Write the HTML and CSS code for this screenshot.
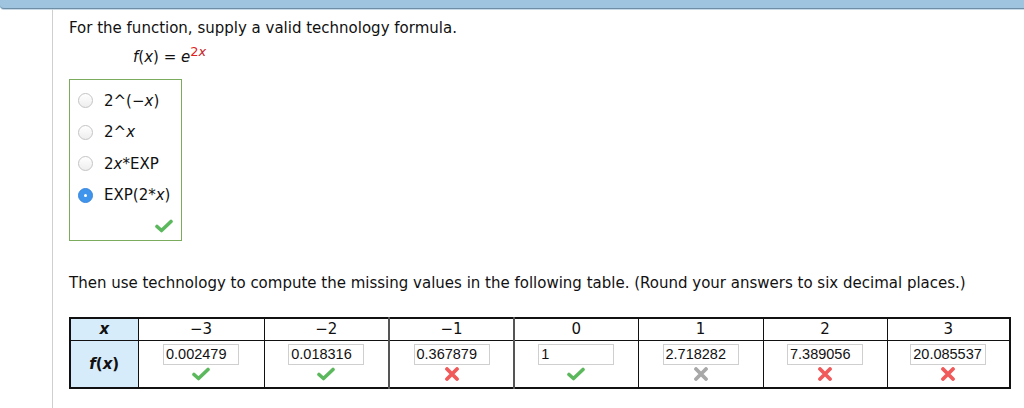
FILE: index.html
```html
<!DOCTYPE html>
<html>
<head>
<meta charset="utf-8">
<link rel="stylesheet" href="styles.css">
</head>
<body>
<div class="topbar"></div>
<div class="page">
  <p class="prompt">For the function, supply a valid technology formula.</p>
  <p class="formula"><i>f</i>(<i>x</i>) = <i>e</i><sup>2<i>x</i></sup></p>
  <div class="choices">
    <div class="opt"><span class="radio"></span><span>2^(−<i>x</i>)</span></div>
    <div class="opt"><span class="radio"></span><span>2^<i>x</i></span></div>
    <div class="opt"><span class="radio"></span><span>2<i>x</i>*EXP</span></div>
    <div class="opt"><span class="radio on"></span><span>EXP(2*<i>x</i>)</span></div>
    <div class="mark-row">
      <svg class="icon" width="18" height="14" viewBox="0 0 18 14"><path d="M2 7.5 L6.5 11.5 L16 2.5" fill="none" stroke="#5cb85c" stroke-width="3.6" stroke-linecap="round" stroke-linejoin="round"/></svg>
    </div>
  </div>
  <p class="prompt second">Then use technology to compute the missing values in the following table. (Round your answers to six decimal places.)</p>
  <table class="grid">
    <colgroup>
      <col class="c0"><col class="c1"><col class="c2"><col class="c3"><col class="c4"><col class="c5"><col class="c6"><col class="c7">
    </colgroup>
    <tr class="head">
      <th class="lab"><b><i>x</i></b></th>
      <td>−3</td><td>−2</td><td class="thick">−1</td><td class="thick">0</td><td>1</td><td>2</td><td>3</td>
    </tr>
    <tr class="vals">
      <th class="lab"><b><i>f</i>(<i>x</i>)</b></th>
      <td><div class="inp">0.002479</div><svg class="icon" width="18" height="14" viewBox="0 0 18 14"><path d="M2 7.5 L6.5 11.5 L16 2.5" fill="none" stroke="#5cb85c" stroke-width="3.6" stroke-linecap="round" stroke-linejoin="round"/></svg></td>
      <td><div class="inp">0.018316</div><svg class="icon" width="18" height="14" viewBox="0 0 18 14"><path d="M2 7.5 L6.5 11.5 L16 2.5" fill="none" stroke="#5cb85c" stroke-width="3.6" stroke-linecap="round" stroke-linejoin="round"/></svg></td>
      <td class="thick"><div class="inp">0.367879</div><svg class="icon" width="18" height="14" viewBox="0 0 18 14"><path d="M4 2 L14 12 M14 2 L4 12" fill="none" stroke="#f05a5a" stroke-width="3.8" stroke-linecap="round"/></svg></td>
      <td class="thick"><div class="inp">1</div><svg class="icon" width="18" height="14" viewBox="0 0 18 14"><path d="M2 7.5 L6.5 11.5 L16 2.5" fill="none" stroke="#5cb85c" stroke-width="3.6" stroke-linecap="round" stroke-linejoin="round"/></svg></td>
      <td><div class="inp">2.718282</div><svg class="icon" width="18" height="14" viewBox="0 0 18 14"><path d="M4 2 L14 12 M14 2 L4 12" fill="none" stroke="#a8a8a8" stroke-width="3.8" stroke-linecap="round"/></svg></td>
      <td><div class="inp">7.389056</div><svg class="icon" width="18" height="14" viewBox="0 0 18 14"><path d="M4 2 L14 12 M14 2 L4 12" fill="none" stroke="#f05a5a" stroke-width="3.8" stroke-linecap="round"/></svg></td>
      <td><div class="inp">20.085537</div><svg class="icon" width="18" height="14" viewBox="0 0 18 14"><path d="M4 2 L14 12 M14 2 L4 12" fill="none" stroke="#f05a5a" stroke-width="3.8" stroke-linecap="round"/></svg></td>
    </tr>
  </table>
</div>
</body>
</html>
```
FILE: styles.css
```css
html, body {
  margin: 0;
  padding: 0;
  background: #fff;
}
body {
  font-family: "DejaVu Sans", Verdana, sans-serif;
  font-size: 15px;
  color: #111;
}
.topbar {
  height: 8px;
  background: #9fc4e0;
  border-bottom: 1px solid #6d8ea5;
  box-shadow: 0 1px 0 #c9d9e5;
  border-bottom-left-radius: 4px;
}
.page {
  margin-left: 52px;
  border-left: 1px solid #cfcfcf;
  height: 399px;
  padding-left: 16px;
  box-sizing: border-box;
}
p { margin: 0; }
.prompt {
  padding-top: 10px;
  line-height: 18px;
}
.formula {
  margin-top: 11px;
  margin-left: 64px;
  line-height: 18px;
}
.formula sup {
  color: #e0231f;
  font-size: 13px;
  vertical-align: 6px;
  line-height: 0;
}
.formula sup i { color: #c4221f; }
.choices {
  margin-top: 13px;
  width: 113px;
  border: 1px solid #7bab5c;
  box-sizing: border-box;
  padding-top: 5px;
  height: 162px;
}
.opt {
  display: flex;
  align-items: center;
  height: 31.5px;
  padding-left: 8px;
  gap: 11px;
}
.radio {
  width: 15px;
  height: 15px;
  border-radius: 50%;
  border: 1px solid #c4c4c4;
  background: linear-gradient(#fff, #eeeeee);
  box-sizing: border-box;
  position: relative;
  flex: none;
}
.radio.on {
  background: #3f94ec;
  border-color: #3a88dc;
}
.radio.on::after {
  content: "";
  position: absolute;
  left: 5px;
  top: 5px;
  width: 3px;
  height: 3px;
  border-radius: 50%;
  background: #fff;
}
.mark-row {
  display: flex;
  justify-content: flex-end;
  padding-right: 8px;
  margin-top: 8px;
}
.second {
  padding-top: 33px;
}
.grid {
  margin-top: 25px;
  border-collapse: collapse;
  table-layout: fixed;
  width: 940px;
  border: 2px solid #111;
}
.grid .c0 { width: 68px; }
.grid .c1 { width: 126px; }
.grid .c2, .grid .c3, .grid .c5 { width: 125px; }
.grid .c4, .grid .c6 { width: 124px; }
.grid .c7 { width: 123px; }
.grid th, .grid td {
  border: 1px solid #111;
  text-align: center;
  padding: 0;
}
.grid .lab {
  background: #d6ecfa;
  font-weight: bold;
}
.grid td.thick { border-left: 2px solid #555; }
.head td, .head th {
  height: 21px;
  line-height: 21px;
}
.vals th, .vals td {
  height: 46px;
  vertical-align: top;
}
.vals th { vertical-align: middle; }
.inp {
  width: 76px;
  height: 21px;
  margin: 3px auto 0;
  border: 1px solid #cfcfcf;
  box-sizing: border-box;
  text-align: left;
  font-family: "Liberation Sans", Arial, sans-serif;
  font-size: 14.5px;
  line-height: 19px;
  padding-left: 2px;
  color: #111;
}
.vals .icon {
  display: block;
  margin: 2px auto 0;
}
```
